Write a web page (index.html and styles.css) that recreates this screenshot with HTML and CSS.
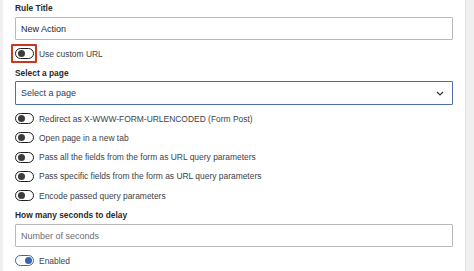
FILE: index.html
```html
<!DOCTYPE html>
<html>
<head>
<meta charset="utf-8">
<link rel="stylesheet" href="styles.css">
</head>
<body>
<div class="page">
  <div class="strip-left"></div>
  <div class="main">
    <div class="label">Rule Title</div>
    <div class="input"><span class="value">New Action</span></div>
    <div class="toggle-row first">
      <span class="toggle highlighted"><span class="knob"></span></span>
      <span class="text">Use custom URL</span>
    </div>
    <div class="label gap">Select a page</div>
    <div class="select">
      <span class="select-value">Select a page</span>
      <svg class="chevron" width="8" height="5" viewBox="0 0 8 5"><path d="M1 1 L4 4 L7 1" fill="none" stroke="#2c3338" stroke-width="1.2"/></svg>
    </div>
    <div class="toggle-list">
      <div class="toggle-row"><span class="toggle"><span class="knob"></span></span><span class="text">Redirect as X-WWW-FORM-URLENCODED (Form Post)</span></div>
      <div class="toggle-row"><span class="toggle"><span class="knob"></span></span><span class="text">Open page in a new tab</span></div>
      <div class="toggle-row"><span class="toggle"><span class="knob"></span></span><span class="text">Pass all the fields from the form as URL query parameters</span></div>
      <div class="toggle-row"><span class="toggle"><span class="knob"></span></span><span class="text">Pass specific fields from the form as URL query parameters</span></div>
      <div class="toggle-row"><span class="toggle"><span class="knob"></span></span><span class="text">Encode passed query parameters</span></div>
    </div>
    <div class="label gap">How many seconds to delay</div>
    <div class="input"><span class="placeholder">Number of seconds</span></div>
    <div class="toggle-row last">
      <span class="toggle on"><span class="knob"></span></span>
      <span class="text">Enabled</span>
    </div>
  </div>
  <div class="strip-right"></div>
</div>
</body>
</html>
```
FILE: styles.css
```css
* { box-sizing: border-box; }
html, body { margin: 0; padding: 0; background: #fff; }
body { font-family: "Liberation Sans", Arial, sans-serif; color: #1e1e1e; }
.page { display: flex; width: 474px; height: 271px; overflow: hidden; }
.strip-left { width: 3px; background: #f0f0f1; flex: none; }
.strip-right { width: 9px; background: #f0f0f1; border-left: 1px solid #e2e2e4; flex: none; }
.main { flex: 1; padding: 2px 12px 0 12px; display: flex; flex-direction: column; }
.label { height: 12px; line-height: 12px; font-size: 8.4px; font-weight: bold; color: #2a2a2a; margin-bottom: 3px; }
.label.gap { margin-top: 8px; margin-bottom: 2px; }
.label.gap + .input { margin-top: 1px; }
.input { height: 23px; border: 1px solid #b9b9bb; border-radius: 1px; display: flex; align-items: center; padding-left: 5px; font-size: 9px; }
.value { color: #1e1e1e; }
.placeholder { color: #6b6e72; }
.select { height: 24px; border: 1.5px solid #4d6ea8; border-radius: 1px; display: flex; align-items: center; justify-content: space-between; padding: 0 8px 0 5px; font-size: 9px; }
.select-value { color: #2c3e5c; }
.chevron { display: block; }
.toggle-row { display: flex; align-items: center; height: 11px; gap: 5px; font-size: 8.45px; color: #3c434a; }
.toggle-row.first { margin-top: 8px; }
.toggle-row.last { margin-top: 8px; }
.toggle-list { display: flex; flex-direction: column; gap: 8.25px; margin-top: 8px; }
.toggle { position: relative; width: 19px; height: 11px; border: 1px solid #1e1e1e; border-radius: 6px; background: #fff; flex: none; }
.toggle .knob { position: absolute; left: 1.5px; top: 1px; width: 7px; height: 7px; border-radius: 50%; background: #3c3c3c; }
.toggle.on { border: 1.3px solid #3566b3; }
.toggle.on .knob { left: auto; right: 1.3px; top: 0.9px; background: #3566b3; }
.toggle.highlighted::after { content: ""; position: absolute; left: -5px; right: -4px; top: -5px; bottom: -5px; border: 2px solid #c8391f; border-radius: 1px; }
.text { white-space: nowrap; }
```
